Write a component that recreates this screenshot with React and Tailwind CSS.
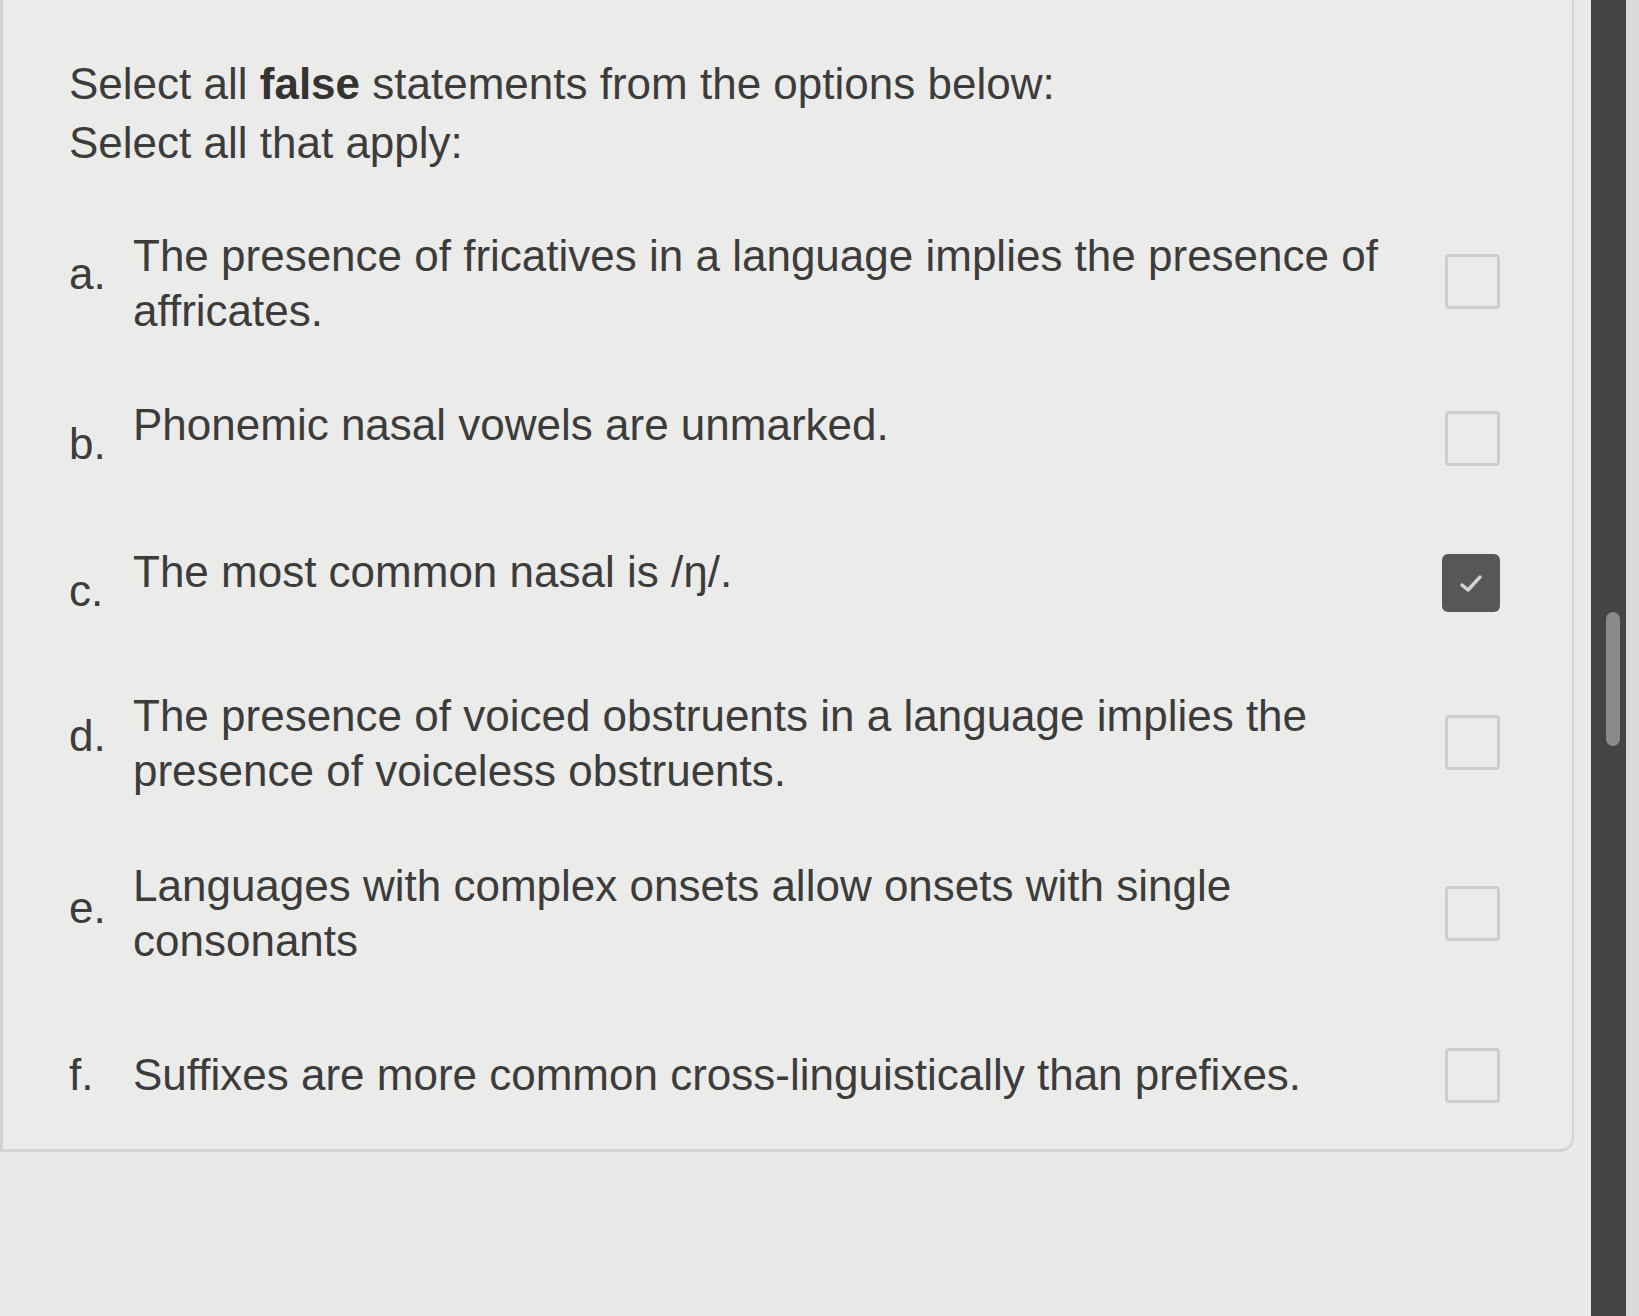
import React from "react";

const rows = [
  { l: "a.", lines: ["The presence of fricatives in a language implies the presence of", "affricates."], h: "h-[169px]", cb: "mt-[26px]", lm: "mt-[18px]", checked: false },
  { l: "b.", lines: ["Phonemic nasal vowels are unmarked."], h: "h-[147px]", cb: "mt-[14px]", lm: "mt-[19px]", checked: false },
  { l: "c.", lines: ["The most common nasal is /ŋ/."], h: "h-[144px]", cb: "mt-[10px]", lm: "mt-[19px]", checked: true },
  { l: "d.", lines: ["The presence of voiced obstruents in a language implies the", "presence of voiceless obstruents."], h: "h-[170px]", cb: "mt-[27px]", lm: "mt-[20px]", checked: false },
  { l: "e.", lines: ["Languages with complex onsets allow onsets with single", "consonants"], h: "h-[189px]", cb: "mt-[28px]", lm: "mt-[22px]", checked: false },
  { l: "f.", lines: ["Suffixes are more common cross-linguistically than prefixes."], h: "h-[100px]", cb: "mt-[1px]", lm: "mt-0", checked: false },
];

function Box({ checked, cls }) {
  if (checked) {
    return (
      <div className={`${cls} w-[58px] h-[58px] rounded-[6px] bg-[#575757] flex items-center justify-center shrink-0`}>
        <svg width="30" height="26" viewBox="0 0 30 26" fill="none">
          <path d="M6 15 L12 20 L24 7" stroke="#d2d2d2" strokeWidth="3.5" strokeLinecap="round" strokeLinejoin="round" />
        </svg>
      </div>
    );
  }
  return <div className={`${cls} w-[55px] h-[55px] rounded-[4px] border-[3px] border-[#cdcdcb] shrink-0`} />;
}

export default function App() {
  return (
    <div
      className="w-[1639px] h-[1316px] bg-[#e5e5e3] flex overflow-hidden text-[#3c3c3c]"
      style={{ fontFamily: '"Liberation Sans", Arial, sans-serif' }}
    >
      <div className="w-[1591px] shrink-0 h-full flex flex-col bg-[#eaeae8]">
        <div className="w-[1574px] h-[1152px] bg-[#ebebe9] border-l-[3px] border-b-[3px] border-r-2 border-[#d3d3d1] rounded-br-[14px] pt-[56px] pl-[66px] pr-[72px]">
          <div className="text-[44px] leading-[55px]">
            Select all <span className="font-bold text-[#333]">false</span> statements from the options below:
          </div>
          <div className="text-[44px] leading-[55px] mt-[4px]">Select all that apply:</div>
          <div className="mt-[58px] flex flex-col">
            {rows.map((r) => (
              <div key={r.l} className={`${r.h} flex items-start`}>
                <div className={`w-[64px] shrink-0 text-[44px] leading-[55px] ${r.lm}`}>{r.l}</div>
                <div className="flex-1 text-[44px] leading-[55px]">
                  {r.lines.map((t, i) => (
                    <div key={i} className="whitespace-nowrap">{t}</div>
                  ))}
                </div>
                <Box checked={r.checked} cls={r.cb} />
              </div>
            ))}
          </div>
        </div>
        <div className="flex-1" />
      </div>
      <div className="w-[35px] shrink-0 h-full bg-[#444444] relative">
        <div className="absolute left-[15px] top-[612px] w-[14px] h-[134px] rounded-full bg-[#8a8a8a]" />
      </div>
      <div className="w-[13px] shrink-0 h-full bg-[#dadad8]" />
    </div>
  );
}
